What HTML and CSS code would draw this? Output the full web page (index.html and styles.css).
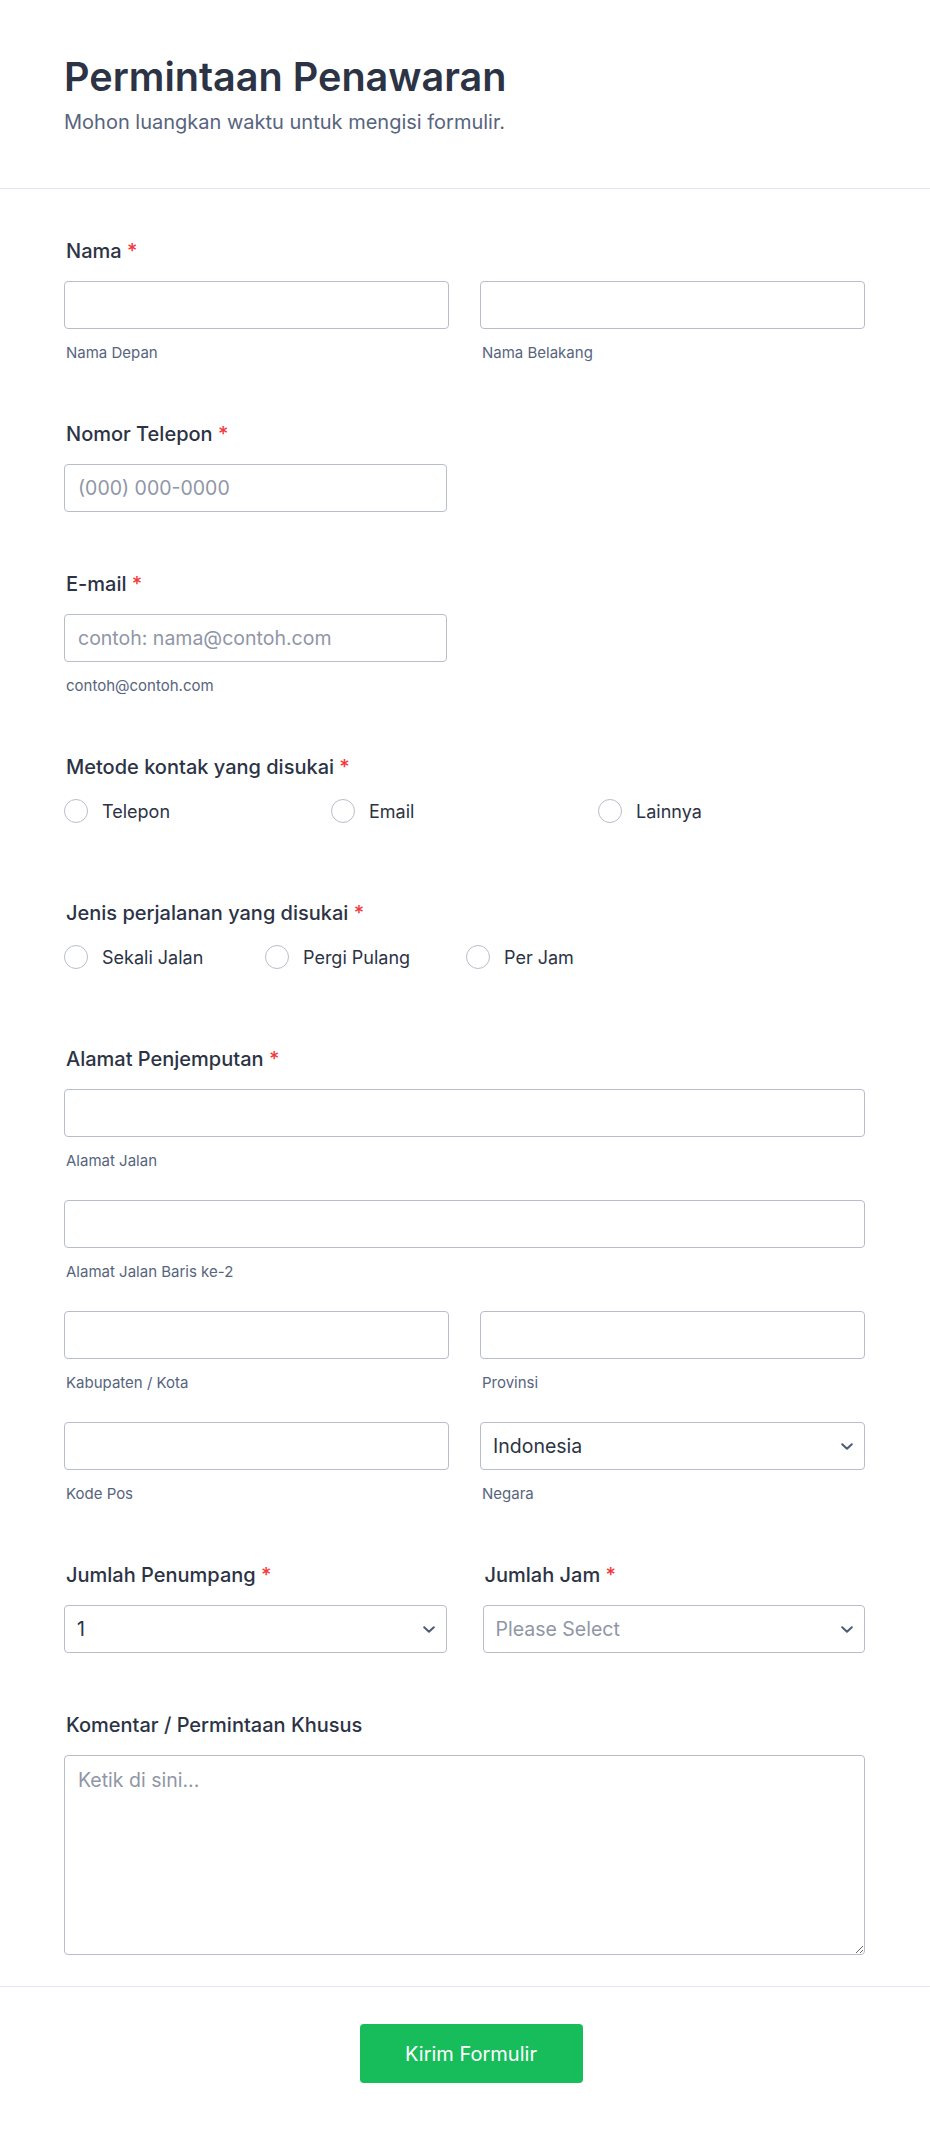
FILE: index.html
```html
<!DOCTYPE html>
<html lang="id">
<head>
  <meta charset="UTF-8">
  <title>Permintaan Penawaran</title>
  <link rel="stylesheet" href="styles.css">
</head>
<body>

  <div class="form-card">

    <!-- Kepala formulir -->
    <header class="form-header">
      <h1>Permintaan Penawaran</h1>
      <p>Mohon luangkan waktu untuk mengisi formulir.</p>
    </header>

    <form class="form-body" onsubmit="return false">

      <div class="field">
        <label class="field-label">Nama <span class="req">*</span></label>
        <div class="cols">
          <div>
            <input type="text" class="text-input">
            <span class="sublabel">Nama Depan</span>
          </div>
          <div>
            <input type="text" class="text-input">
            <span class="sublabel">Nama Belakang</span>
          </div>
        </div>
      </div>

      <div class="field">
        <label class="field-label">Nomor Telepon <span class="req">*</span></label>
        <input type="text" class="text-input short" placeholder="(000) 000-0000">
      </div>

      <div class="field">
        <label class="field-label">E-mail <span class="req">*</span></label>
        <input type="text" class="text-input short" placeholder="contoh: nama@contoh.com">
        <span class="sublabel">contoh@contoh.com</span>
      </div>

      <div class="field">
        <label class="field-label">Metode kontak yang disukai <span class="req">*</span></label>
        <div class="options three">
          <label class="option"><input type="radio" name="kontak"><span>Telepon</span></label>
          <label class="option"><input type="radio" name="kontak"><span>Email</span></label>
          <label class="option"><input type="radio" name="kontak"><span>Lainnya</span></label>
        </div>
      </div>

      <div class="field">
        <label class="field-label">Jenis perjalanan yang disukai <span class="req">*</span></label>
        <div class="options fixed">
          <label class="option"><input type="radio" name="jenis"><span>Sekali Jalan</span></label>
          <label class="option"><input type="radio" name="jenis"><span>Pergi Pulang</span></label>
          <label class="option"><input type="radio" name="jenis"><span>Per Jam</span></label>
        </div>
      </div>

      <div class="field">
        <label class="field-label">Alamat Penjemputan <span class="req">*</span></label>
        <div class="address">
          <div>
            <input type="text" class="text-input">
            <span class="sublabel">Alamat Jalan</span>
          </div>
          <div>
            <input type="text" class="text-input">
            <span class="sublabel">Alamat Jalan Baris ke-2</span>
          </div>
          <div class="cols">
            <div>
              <input type="text" class="text-input">
              <span class="sublabel">Kabupaten / Kota</span>
            </div>
            <div>
              <input type="text" class="text-input">
              <span class="sublabel">Provinsi</span>
            </div>
          </div>
          <div class="cols">
            <div>
              <input type="text" class="text-input">
              <span class="sublabel">Kode Pos</span>
            </div>
            <div>
              <div class="select-wrap">
                <select class="select-input">
                  <option>Indonesia</option>
                </select>
                <svg class="chevron" width="12" height="7" viewBox="0 0 12 7"><path d="M1.2 1.2 L6 5.8 L10.8 1.2" fill="none" stroke="#4f5b73" stroke-width="2" stroke-linecap="round" stroke-linejoin="round"/></svg>
              </div>
              <span class="sublabel">Negara</span>
            </div>
          </div>
        </div>
      </div>

      <div class="field cols wide-gap">
        <div>
          <label class="field-label">Jumlah Penumpang <span class="req">*</span></label>
          <div class="select-wrap">
            <select class="select-input">
              <option>1</option>
              <option>2</option>
              <option>3</option>
            </select>
            <svg class="chevron" width="12" height="7" viewBox="0 0 12 7"><path d="M1.2 1.2 L6 5.8 L10.8 1.2" fill="none" stroke="#4f5b73" stroke-width="2" stroke-linecap="round" stroke-linejoin="round"/></svg>
          </div>
        </div>
        <div>
          <label class="field-label">Jumlah Jam <span class="req">*</span></label>
          <div class="select-wrap">
            <select class="select-input empty">
              <option>Please Select</option>
            </select>
            <svg class="chevron" width="12" height="7" viewBox="0 0 12 7"><path d="M1.2 1.2 L6 5.8 L10.8 1.2" fill="none" stroke="#4f5b73" stroke-width="2" stroke-linecap="round" stroke-linejoin="round"/></svg>
          </div>
        </div>
      </div>

      <div class="field last">
        <label class="field-label">Komentar / Permintaan Khusus</label>
        <textarea class="text-area" placeholder="Ketik di sini..."></textarea>
      </div>

    </form>

    <!-- Tombol kirim -->
    <footer class="form-footer">
      <button type="button" class="submit-btn">Kirim Formulir</button>
    </footer>

  </div>

</body>
</html>
```

FILE: styles.css
```css
body {
  margin: 0;
  background-color: #fff;
  color: #2c3345;
  font-family: Inter, "Noto Sans", sans-serif;
}

.form-card {
  width: 930px;
}

.form-header {
  padding: 53px 65px 54px 64px;
  border-bottom: 1px solid #e3e6ee;
}

.form-header h1 {
  margin: 0;
  font-size: 39.6px;
  line-height: 48px;
  font-weight: 600;
  color: #2c3345;
}

.form-header p {
  margin: 9px 0 0;
  font-size: 20px;
  line-height: 24px;
  color: #57647e;
}

.form-body {
  padding: 50px 65px 31px 64px;
}

.field {
  margin-bottom: 60px;
}

.field.last {
  margin-bottom: 0;
}

.field-label {
  display: block;
  padding-left: 2px;
  margin-bottom: 18px;
  font-size: 20px;
  line-height: 24px;
  font-weight: 500;
  color: #2c3345;
}

.req {
  color: #f23a3c;
}

.cols {
  display: grid;
  grid-template-columns: 1fr 1fr;
  gap: 31px;
}

.cols.wide-gap {
  gap: 36px;
}

.address {
  display: flex;
  flex-direction: column;
  gap: 30px;
}

.text-input,
.select-input,
.text-area {
  display: block;
  box-sizing: border-box;
  width: 100%;
  margin: 0;
  border: 1px solid #b8bdc9;
  border-radius: 4px;
  background-color: #fff;
  font-family: Inter, "Noto Sans", sans-serif;
  font-size: 19.5px;
  color: #2c3345;
  outline: none;
}

.text-input {
  height: 48px;
  padding: 0 13px;
}

.text-input.short {
  width: 383px;
}

.text-input::placeholder,
.text-area::placeholder {
  color: #8f96a6;
}

.sublabel {
  display: block;
  margin-top: 15px;
  padding-left: 2px;
  font-size: 15px;
  line-height: 18px;
  color: #57647e;
}

.select-wrap {
  position: relative;
}

.select-input {
  height: 48px;
  padding: 0 40px 0 12px;
  appearance: none;
  -webkit-appearance: none;
}

.select-input.empty {
  color: #8f96a6;
}

.chevron {
  position: absolute;
  right: 12px;
  top: 21px;
  pointer-events: none;
}

.options {
  display: grid;
  padding: 2px 0 18px;
}

.options.three {
  grid-template-columns: repeat(3, 1fr);
}

.options.fixed {
  grid-template-columns: repeat(3, 200px);
  gap: 1px;
}

.option {
  display: flex;
  align-items: center;
  gap: 14px;
  height: 24px;
  font-size: 18px;
  color: #2c3345;
  cursor: pointer;
}

.option input {
  appearance: none;
  -webkit-appearance: none;
  box-sizing: border-box;
  width: 24px;
  height: 24px;
  margin: 0;
  border: 1px solid #b8bdc9;
  border-radius: 50%;
  background-color: #fff;
  flex-shrink: 0;
}

.text-area {
  height: 200px;
  padding: 12px 13px;
  line-height: 24px;
  resize: both;
}

.form-footer {
  display: flex;
  justify-content: center;
  padding: 37px 0 50px 12px;
  border-top: 1px solid #e3e6ee;
}

.submit-btn {
  width: 223px;
  height: 59px;
  border: none;
  border-radius: 4px;
  background-color: #18bd5b;
  color: #fff;
  font-family: Inter, "Noto Sans", sans-serif;
  font-size: 20px;
  cursor: pointer;
}
```
